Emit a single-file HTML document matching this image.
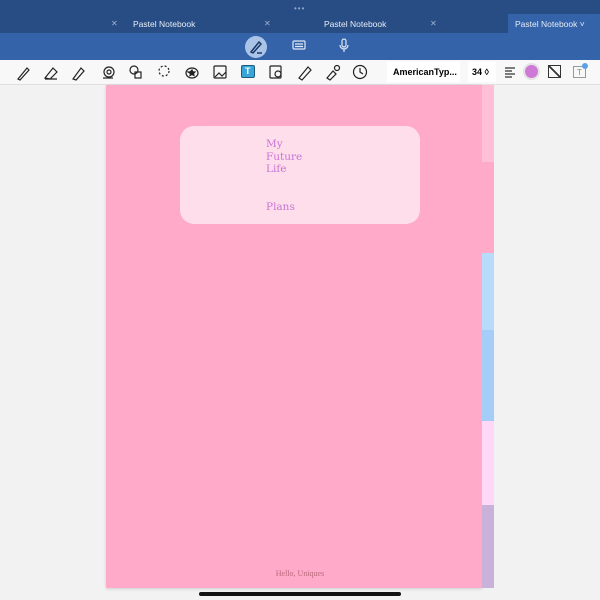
<!DOCTYPE html>
<html><head><style>
*{margin:0;padding:0;box-sizing:border-box}
body{width:600px;height:600px;overflow:hidden;background:#f2f2f2;font-family:"Liberation Sans",sans-serif;position:relative}
.top{position:absolute;left:0;top:0;width:600px;height:34px;background:#284d85}
.tab{position:absolute;top:14px;height:20px;color:#e6ecf5;font-size:8.5px;line-height:20px}
.x{position:absolute;top:14px;color:#9fb2d0;font-size:8px;line-height:19px}
.bar2{position:absolute;left:0;top:33px;width:600px;height:27px;background:#3463aa}
.tools{position:absolute;left:0;top:60px;width:600px;height:25px;background:#f8f8f8;border-bottom:1px solid #e0e0e0}
.page{position:absolute;left:106px;top:85px;width:376px;height:503px;background:#ffaac8;box-shadow:0 1px 3px rgba(0,0,0,0.15)}
.card{position:absolute;left:180px;top:126px;width:240px;height:98px;background:#ffdeeb;border-radius:14px}
.t{position:absolute;left:266px;color:#c774d4;font-family:"DejaVu Serif",serif;font-size:10.5px;line-height:12.5px}
.side{position:absolute;left:482px;width:12px}
</style></head><body>
<div class="top"></div>
<div style="position:absolute;left:294px;top:4px;color:#8fa6cc;font-size:8px;letter-spacing:1px">•••</div>
<div class="x" style="left:111px">✕</div><div class="tab" style="left:133px">Pastel Notebook</div>
<div class="x" style="left:264px">✕</div><div class="tab" style="left:324px">Pastel Notebook</div>
<div class="x" style="left:430px">✕</div>
<div class="tab" style="left:508px;width:92px;background:#3463aa;padding-left:7px">Pastel Notebook ˅</div>
<div class="bar2"></div>
<div style="position:absolute;left:245px;top:36px;width:22px;height:22px;border-radius:50%;background:#a9c4e6"></div>
<svg style="position:absolute;left:248px;top:39px" width="16" height="16" viewBox="0 0 16 16" fill="none" stroke="#1d3a66" stroke-width="1.5"><path d="M3 13 L11 3 L13 5 L5 14 Z M9 14h5"/></svg>
<svg style="position:absolute;left:292px;top:40px" width="14" height="11" viewBox="0 0 14 11" fill="none" stroke="#dfe8f5" stroke-width="1.2"><rect x="1" y="1" width="12" height="8" rx="1"/><path d="M3 4h8M3 6.5h8"/></svg>
<svg style="position:absolute;left:339px;top:38px" width="10" height="15" viewBox="0 0 10 15" fill="none" stroke="#dfe8f5" stroke-width="1.2"><rect x="3" y="1" width="4" height="8" rx="2"/><path d="M1 7a4 4 0 0 0 8 0M5 11v3"/></svg>
<div class="tools"></div>
<svg style="position:absolute;left:0;top:60px" width="380" height="25" viewBox="0 0 380 25" fill="none" stroke="#222" stroke-width="1.2">
<path d="M18 19 L27 8 L29 10 L20 20Z"/>
<path d="M45 18 L53 8 L57 12 L50 19Z M45 19h12"/>
<path d="M73 19 L81 8 L84 11 L76 20Z"/>
<circle cx="109" cy="12" r="5"/><circle cx="109" cy="12" r="2"/><path d="M103 18h10"/>
<circle cx="134" cy="10" r="4"/><rect x="135" y="12" width="6" height="6"/>
<circle cx="164" cy="11" r="5" stroke-dasharray="2 2"/>
<ellipse cx="192" cy="13" rx="6" ry="5"/><path d="M192 10l1 2 2 0-1.5 1.5 .5 2-2-1-2 1 .5-2L188 12h2z" fill="#222"/>
<rect x="214" y="6" width="12" height="12" rx="1"/><path d="M215 17l4-4 3 3 4-4"/>
<rect x="270" y="6" width="11" height="12" rx="1"/><circle cx="278" cy="14" r="3"/>
<path d="M299 18 L308 7 L311 10 L302 20Z"/>
<path d="M327 18 L333 11 L336 14 L330 20Z"/><circle cx="337" cy="8" r="2.5"/>
<circle cx="360" cy="12" r="6.5"/><path d="M360 8v4l3 2"/>
</svg>
<div style="position:absolute;left:241px;top:65px;width:14px;height:13px;border-radius:2px;background:#39a5d6;border:1px solid #1a5b7e"></div>
<div style="position:absolute;left:245px;top:66px;color:#fff;font-size:9px;font-weight:bold">T</div>
<div style="position:absolute;left:387px;top:62px;width:73px;height:20px;background:#fff;font-size:9px;font-weight:bold;line-height:20px;padding-left:6px">AmericanTyp...</div>
<div style="position:absolute;left:468px;top:62px;width:28px;height:20px;background:#fff;font-size:9px;font-weight:bold;line-height:20px;padding-left:4px">34 ◊</div>
<svg style="position:absolute;left:504px;top:66px" width="12" height="12" stroke="#333" stroke-width="1.2"><path d="M1 2h10M1 5h7M1 8h10M1 11h7"/></svg>
<div style="position:absolute;left:523px;top:63px;width:17px;height:17px;border-radius:50%;background:#d07ad8;border:2px solid #e4e4e4"></div>
<div style="position:absolute;left:548px;top:65px;width:13px;height:13px;border:1.3px solid #333;background:linear-gradient(45deg,transparent 45%,#333 45%,#333 55%,transparent 55%)"></div>
<div style="position:absolute;left:573px;top:66px;width:13px;height:12px;border:1px solid #999;font-size:8px;color:#888;text-align:center;line-height:11px">T</div>
<div style="position:absolute;left:582px;top:63px;width:6px;height:6px;border-radius:50%;background:#5aa2e8"></div>
<div class="page"></div>
<div class="side" style="top:85px;height:77px;background:#ffbfd6"></div>
<div class="side" style="top:162px;height:91px;background:#ffaac8"></div>
<div class="side" style="top:253px;height:77px;background:#b8dbfb"></div>
<div class="side" style="top:330px;height:91px;background:#a4cdf8"></div>
<div class="side" style="top:421px;height:84px;background:#ffd7f7"></div>
<div class="side" style="top:505px;height:83px;background:#c9b2da"></div>
<div class="card"></div>
<div class="t" style="top:138px">My<br>Future<br>Life</div>
<div class="t" style="top:201px">Plans</div>
<div style="position:absolute;left:0;width:600px;top:569px;text-align:center;color:#b86a7e;font-family:'Liberation Serif',serif;font-size:8px">Hello, Uniques</div>
<div style="position:absolute;left:199px;top:592px;width:202px;height:4px;border-radius:2px;background:#111"></div>
</body></html>
